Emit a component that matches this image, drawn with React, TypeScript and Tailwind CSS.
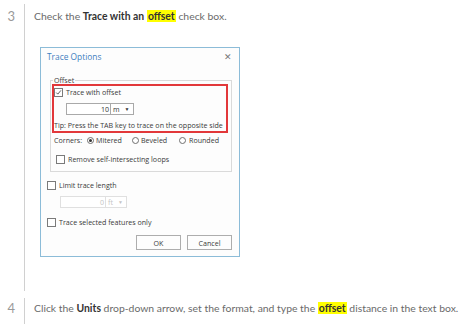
import React from "react";

const ui = "font-['Open_Sans',sans-serif]";

function CheckBox({ checked = false, disabled = false }: { checked?: boolean; disabled?: boolean }) {
  return (
    <span
      className={`flex h-[9px] w-[9px] shrink-0 items-center justify-center border bg-white ${
        disabled ? "border-[#c8c8c8]" : "border-[#7a7a7a]"
      }`}
    >
      {checked && (
        <svg viewBox="0 0 9 9" className="h-[9px] w-[9px]">
          <path d="M1.6 4.6 L3.6 6.6 L7.6 1.8" fill="none" stroke="#333" strokeWidth="1" />
        </svg>
      )}
    </span>
  );
}

function Radio({ checked = false }: { checked?: boolean }) {
  return (
    <span className="flex h-[7px] w-[7px] shrink-0 items-center justify-center rounded-full border border-[#6f6f6f] bg-white">
      {checked && <span className="h-[3px] w-[3px] rounded-full bg-[#333]" />}
    </span>
  );
}

function UnitInput({
  value,
  unit,
  width,
  disabled = false,
}: {
  value: string;
  unit: string;
  width: string;
  disabled?: boolean;
}) {
  return (
    <div
      className={`flex h-[12px] items-stretch border bg-white ${
        disabled ? "border-[#e0e0e0] text-[#c4c4c4]" : "border-[#a9a9a9] text-[#333]"
      }`}
    >
      <span className={`flex items-center justify-end pr-[1px] ${width}`}>{value}</span>
      <span
        className={`flex items-center gap-[5px] border-l pl-[2px] pr-[3px] ${
          disabled ? "border-[#e0e0e0]" : "border-[#a9a9a9]"
        }`}
      >
        {unit}
        <span className="text-[5px]">▼</span>
      </span>
    </div>
  );
}

function TraceOptions() {
  return (
    <div className={`ml-[6px] mt-[23px] w-[200px] border border-[#8cbcd8] bg-[#fdfdfd] text-[7.1px] leading-[12px] text-[#3a3a3a] ${ui}`}>
      <div className="flex h-[18px] items-center justify-between pl-[6px] pr-[7px]">
        <span className="text-[8.4px] text-[#3f80c0]">Trace Options</span>
        <span className="text-[9px] text-[#777]">✕</span>
      </div>

      <fieldset className="ml-[9px] mr-[7px] mt-[10px] border border-[#dadada] pb-[6px] pl-[1px] pr-[3px]">
        <legend className="ml-[1px] px-[1px] leading-[8px]">Offset</legend>

        <div className="border-2 border-[#e2383a]">
          <div className="flex h-[12px] items-center gap-[3px]">
            <CheckBox checked />
            <span>Trace with offset</span>
          </div>
          <div className="ml-[12px] mt-[5px] flex">
            <UnitInput value="10" unit="m" width="w-[43px]" />
          </div>
          <div className="mt-[4px] h-[12px] whitespace-nowrap">
            Tip: Press the TAB key to trace on the opposite side
          </div>
        </div>

        <div className="ml-[2px] mt-[1px] flex h-[12px] items-center">
          <span className="w-[33px]">Corners:</span>
          <Radio checked />
          <span className="ml-[2px] w-[36px]">Mitered</span>
          <Radio />
          <span className="ml-[2px] w-[38px]">Beveled</span>
          <Radio />
          <span className="ml-[3px]">Rounded</span>
        </div>

        <div className="ml-[4px] mt-[7px] flex h-[12px] items-center gap-[3px]">
          <CheckBox />
          <span>Remove self-intersecting loops</span>
        </div>
      </fieldset>

      <div className="pl-[6px] pr-[7px]">
        <div className="mt-[7px] flex h-[12px] items-center gap-[3px]">
          <CheckBox />
          <span>Limit trace length</span>
        </div>
        <div className="ml-[13px] mt-[5px] flex">
          <UnitInput value="0" unit="ft" width="w-[44px]" disabled />
        </div>
        <div className="mt-[8px] flex h-[12px] items-center gap-[3px]">
          <CheckBox />
          <span>Trace selected features only</span>
        </div>
        <div className="mb-[6px] mt-[7px] flex justify-end gap-[6px]">
          <button className="flex h-[15px] w-[45px] items-center justify-center border border-[#adadad] bg-[#fdfdfd]">
            OK
          </button>
          <button className="flex h-[15px] w-[45px] items-center justify-center border border-[#adadad] bg-[#fdfdfd]">
            Cancel
          </button>
        </div>
      </div>
    </div>
  );
}

function Mark({ children }: { children: React.ReactNode }) {
  return <span className="bg-[#ffff00] px-[1px] font-bold text-[#333]">{children}</span>;
}

export default function App() {
  return (
    <main className="h-[324px] overflow-hidden bg-white font-['Lato',sans-serif] text-[10.4px] leading-[16px] text-[#6a6a6a]">
      <section className="mt-[4px] flex">
        <div className="w-[25px] shrink-0 border-r border-[#d0d0d0] pr-[9px] pt-[4px] text-right text-[13px] text-[#9a9a9a]">
          3
        </div>
        <div className="pb-[34px] pl-[9px] pt-[4px]">
          <p>
            Check the <b className="text-[#333]">Trace with an</b> <Mark>offset</Mark> check box.
          </p>
          <TraceOptions />
        </div>
      </section>

      <section className="mt-[7px] flex">
        <div className="w-[25px] shrink-0 border-r border-[#d0d0d0] pr-[9px] pt-[2px] text-right text-[13px] text-[#9a9a9a]">
          4
        </div>
        <div className="pb-[20px] pl-[9px] pt-[2px]">
          <p className="whitespace-nowrap">
            Click the <b className="text-[#333]">Units</b> drop-down arrow, set the format, and type the{" "}
            <Mark>offset</Mark> distance in the text box.
          </p>
        </div>
      </section>
    </main>
  );
}
